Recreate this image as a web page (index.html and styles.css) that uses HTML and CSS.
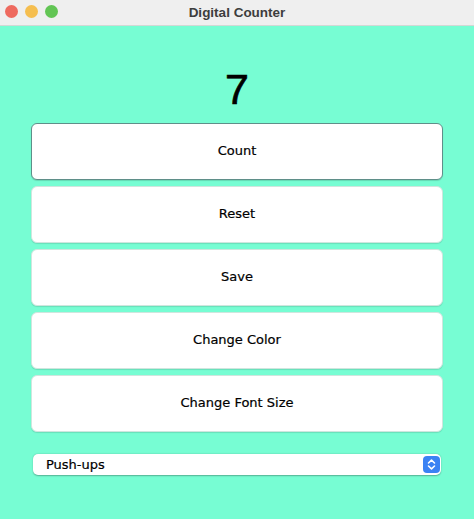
FILE: index.html
```html
<!DOCTYPE html>
<html>
<head>
<meta charset="utf-8">
<link rel="stylesheet" href="styles.css">
</head>
<body>
<div class="window">
  <div class="titlebar">
    <div class="lights">
      <span class="light red"></span>
      <span class="light yellow"></span>
      <span class="light green"></span>
    </div>
    <div class="title">Digital Counter</div>
  </div>
  <div class="content">
    <div class="display">7</div>
    <div class="buttons">
      <button class="btn focused">Count</button>
      <button class="btn">Reset</button>
      <button class="btn">Save</button>
      <button class="btn">Change Color</button>
      <button class="btn">Change Font Size</button>
    </div>
    <div class="select">
      <span class="select-label">Push-ups</span>
      <span class="stepper">
        <svg width="17" height="17" viewBox="0 0 17 17">
          <path d="M5.5 7 L8.5 4.2 L11.5 7" fill="none" stroke="#fff" stroke-width="1.6" stroke-linecap="round" stroke-linejoin="round"/>
          <path d="M5.5 10 L8.5 12.8 L11.5 10" fill="none" stroke="#fff" stroke-width="1.6" stroke-linecap="round" stroke-linejoin="round"/>
        </svg>
      </span>
    </div>
  </div>
</div>
</body>
</html>
```

FILE: styles.css
```css
html, body {
  margin: 0;
  padding: 0;
}
body {
  width: 474px;
  height: 519px;
  overflow: hidden;
  background: #77fdd3;
  font-family: "DejaVu Sans", "Noto Sans", sans-serif;
}
.window {
  width: 474px;
  height: 519px;
  display: flex;
  flex-direction: column;
}
.titlebar {
  height: 25px;
  background: #efefef;
  border-bottom: 1px solid #d2d8d5;
  display: flex;
  align-items: center;
  justify-content: center;
  position: relative;
}
.lights {
  position: absolute;
  left: 5px;
  top: 5px;
  display: flex;
  gap: 7px;
}
.light {
  width: 13px;
  height: 13px;
  border-radius: 50%;
  display: block;
}
.red { background: #ee6a5f; }
.yellow { background: #f5be4f; }
.green { background: #62c554; }
.title {
  font-family: "Liberation Sans", Arial, sans-serif;
  font-weight: bold;
  font-size: 13.5px;
  color: #3d3d3d;
}
.content {
  flex: 1;
  display: flex;
  flex-direction: column;
  padding: 0 31px;
}
.display {
  padding-top: 38px;
  height: 50px;
  line-height: 50px;
  margin-bottom: 9px;
  text-align: center;
  font-family: "Liberation Sans", Arial, sans-serif;
  font-size: 43px;
  color: #000;
  -webkit-text-stroke: 0.7px #000;
}
.buttons {
  display: flex;
  flex-direction: column;
  gap: 6px;
}
.btn {
  height: 57px;
  margin: 0;
  background: #fff;
  border: 1px solid #cfe6de;
  border-radius: 6px;
  box-shadow: 0 1px 1px rgba(0, 0, 0, 0.12);
  font-family: "DejaVu Sans", sans-serif;
  font-size: 13px;
  color: #000;
  padding: 0 0 2px 0;
  -webkit-text-stroke: 0.2px #000;
}
.btn.focused {
  border: 1.5px solid #5f8f89;
  box-shadow: 0 1px 1px rgba(0, 0, 0, 0.15);
}
.select {
  margin: 22px 2px 0 2px;
  height: 21px;
  background: #fff;
  border-radius: 5px;
  box-shadow: 0 0.5px 1.5px rgba(0, 0, 0, 0.3);
  display: flex;
  align-items: center;
  justify-content: space-between;
  padding: 0 1px 0 13px;
}
.select-label {
  font-size: 13px;
  color: #000;
  -webkit-text-stroke: 0.2px #000;
}
.stepper {
  width: 17px;
  height: 17px;
  border-radius: 4px;
  background: #3b82f3;
  display: block;
}
.stepper svg {
  display: block;
}
```
